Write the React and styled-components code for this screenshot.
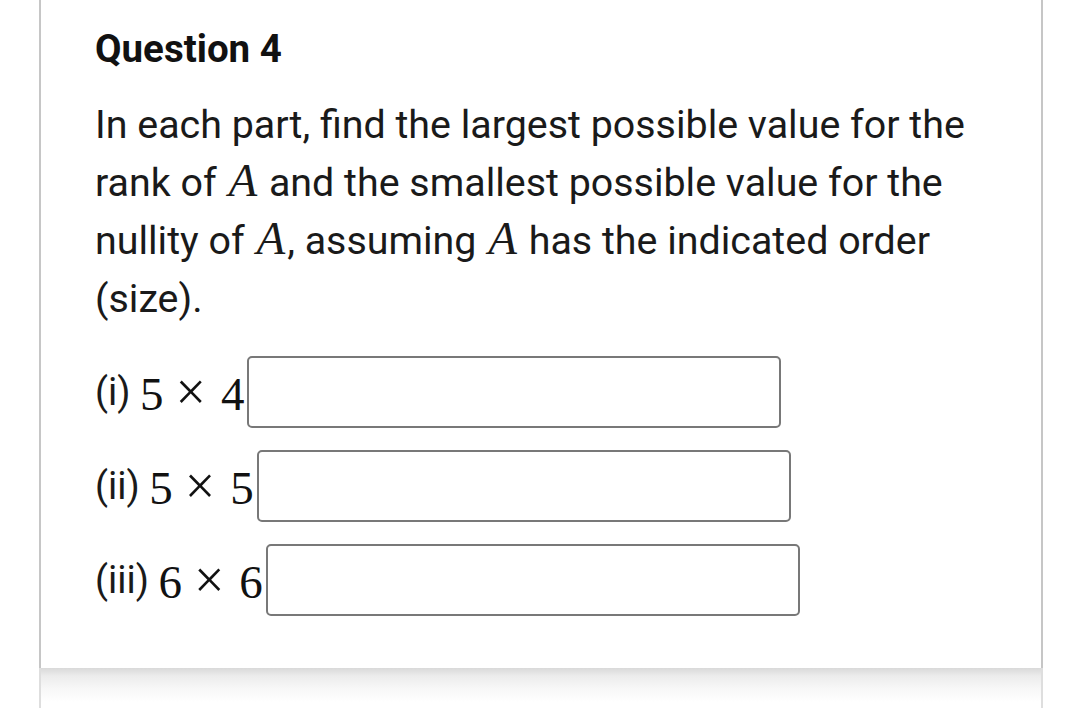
import React from "react";
import styled, { createGlobalStyle } from "styled-components";

const Global = createGlobalStyle`
  html, body { margin: 0; padding: 0; background: #ffffff; }
  body { font-family: Roboto, "Noto Sans", Arial, sans-serif; color: #111; }
`;

const Page = styled.div`
  width: 1080px;
  height: 708px;
  overflow: hidden;
  padding-left: 39px;
  box-sizing: border-box;
`;

const Card = styled.section`
  width: 1004px;
  height: 668px;
  box-sizing: border-box;
  border-left: 2px solid #c6c6c6;
  border-right: 2px solid #c6c6c6;
  background: #fff;
  padding: 26px 0 0 54px;
`;

const NextCard = styled.div`
  width: 1004px;
  height: 40px;
  box-sizing: border-box;
  border-left: 2px solid #dedede;
  border-right: 2px solid #dedede;
  background: linear-gradient(#d9d9d9 0px, #ececec 8px, #f7f7f7 20px, #ffffff 34px);
`;

const Title = styled.h2`
  margin: 0;
  font-family: Roboto, sans-serif;
  font-weight: 700;
  font-size: 38.5px;
  line-height: 46px;
  color: #111;
`;

const Prompt = styled.p`
  margin: 24px 0 0;
  font-size: 39.4px;
  line-height: 58px;
  width: 905px;
  color: #1a1a1a;
`;

const Words = styled.span``;

const MathVar = styled.span`
  display: inline-block;
  font-family: "Liberation Serif", "DejaVu Serif", serif;
  font-style: italic;
  font-size: 47px;
  line-height: 40px;
  padding: 0 2px;
`;

const Parts = styled.div`
  margin-top: 28px;
  display: flex;
  flex-direction: column;
  gap: 22px;
`;

const Row = styled.div`
  display: flex;
  align-items: center;
  height: 72px;
`;

const Label = styled.span`
  font-size: 38px;
  color: #1a1a1a;
  white-space: pre;
`;

const Expr = styled.span`
  font-family: "Liberation Serif", "DejaVu Serif", serif;
  font-size: 47px;
  line-height: 1;
  color: #111;
  white-space: pre;
`;

const Times = styled.span`
  font-size: 54px;
  line-height: 1;
  margin: 0 15px 0 12px;
`;

const Input = styled.input`
  width: 534px;
  height: 72px;
  box-sizing: border-box;
  border: 2px solid #787878;
  border-radius: 5px;
  background: #fff;
  margin-left: 3px;
  outline: none;
`;

const parts = [
  { label: "(i) ", a: "5", b: "4" },
  { label: "(ii) ", a: "5", b: "5" },
  { label: "(iii) ", a: "6", b: "6" },
];

export default function App() {
  return (
    <>
      <Global />
      <Page>
        <Card>
          <Title>Question 4</Title>
          <Prompt>
            <Words>In each part, find the largest possible value for the </Words>
            <Words>rank of </Words>
            <MathVar>A</MathVar>
            <Words> and the smallest possible value for the </Words>
            <Words>nullity of </Words>
            <MathVar>A</MathVar>
            <Words>, assuming </Words>
            <MathVar>A</MathVar>
            <Words> has the indicated order </Words>
            <Words>(size).</Words>
          </Prompt>
          <Parts>
            {parts.map((p) => (
              <Row key={p.label}>
                <Label>{p.label}</Label>
                <Expr>
                  {p.a}
                  <Times>×</Times>
                  {p.b}
                </Expr>
                <Input type="text" aria-label={`answer ${p.label}`} />
              </Row>
            ))}
          </Parts>
        </Card>
        <NextCard />
      </Page>
    </>
  );
}
